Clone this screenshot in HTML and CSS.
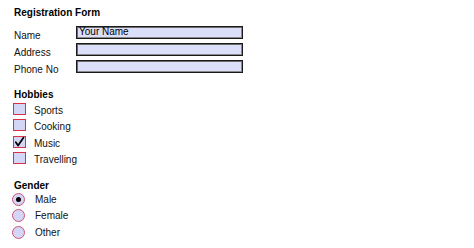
FILE: index.html
```html
<!DOCTYPE html>
<html>
<head>
<meta charset="utf-8">
<link rel="stylesheet" href="styles.css">
</head>
<body>
<div class="form">
  <div class="title">Registration Form</div>
  <div class="fields">
    <div class="field"><span class="label">Name</span><div class="input">Your Name</div></div>
    <div class="field"><span class="label">Address</span><div class="input"></div></div>
    <div class="field"><span class="label">Phone No</span><div class="input"></div></div>
  </div>
  <div class="section-title hobbies">Hobbies</div>
  <div class="options">
    <div class="option"><span class="check"></span><span class="opt-label">Sports</span></div>
    <div class="option"><span class="check"></span><span class="opt-label">Cooking</span></div>
    <div class="option"><span class="check"><svg class="tick" viewBox="0 0 11 10" width="11" height="10"><path d="M1.8 5.2 L4.1 8.6 L9.4 0.8" fill="none" stroke="#000" stroke-width="1.7" stroke-linecap="round" stroke-linejoin="round"/></svg></span><span class="opt-label">Music</span></div>
    <div class="option"><span class="check"></span><span class="opt-label">Travelling</span></div>
  </div>
  <div class="section-title gender">Gender</div>
  <div class="options radios">
    <div class="option"><span class="radio selected"></span><span class="opt-label">Male</span></div>
    <div class="option"><span class="radio"></span><span class="opt-label">Female</span></div>
    <div class="option"><span class="radio"></span><span class="opt-label">Other</span></div>
  </div>
</div>
</body>
</html>
```
FILE: styles.css
```css
html, body {
  margin: 0;
  padding: 0;
  background: #ffffff;
}
body {
  font-family: "Liberation Sans", Arial, sans-serif;
  font-size: 10px;
  color: #111;
}
.form {
  padding: 7px 0 0 14px;
  display: flex;
  flex-direction: column;
}
.title, .section-title {
  font-weight: bold;
  line-height: 12px;
  color: #000;
}
.fields {
  margin-top: 7px;
  display: flex;
  flex-direction: column;
  gap: 1px;
}
.field {
  display: flex;
  align-items: flex-start;
}
.label {
  width: 62px;
  padding-top: 3px;
  line-height: 13px;
}
.input {
  box-sizing: border-box;
  width: 167px;
  height: 13px;
  background: #dcdff9;
  border: 1px solid #1a1a1a;
  box-shadow: inset 1px 1px 0 #6a6a6a, inset -1px -1px 0 #8a8a8a;
  padding: 0 0 0 2px;
  line-height: 10px;
  font-size: 10px;
  color: #000;
}
.hobbies {
  margin-top: 13px;
}
.options {
  margin-top: 2px;
  display: flex;
  flex-direction: column;
}
.option {
  display: flex;
  align-items: flex-start;
  line-height: 16px;
  height: 16px;
}
.option:nth-child(even) {
  height: 17px;
}
.check {
  box-sizing: border-box;
  width: 13px;
  height: 12px;
  margin-left: -1px;
  border: 1px solid #dc2f48;
  background: #d3d6f6;
  display: flex;
  align-items: center;
  justify-content: center;
}
.tick {
  display: block;
}
.opt-label {
  margin-left: 8px;
}
.gender {
  margin-top: 11px;
}
.radios {
  margin-top: 0;
}
.radio {
  box-sizing: border-box;
  width: 13px;
  height: 13px;
  margin-left: -2px;
  margin-top: 1px;
  border-radius: 50%;
  border: 1.5px solid #d4506c;
  background: #d3d6f6;
  display: flex;
  align-items: center;
  justify-content: center;
}
.radio.selected::after {
  content: "";
  width: 5px;
  height: 5px;
  border-radius: 50%;
  background: #000;
}
.radios .opt-label {
  margin-left: 10px;
}
```
